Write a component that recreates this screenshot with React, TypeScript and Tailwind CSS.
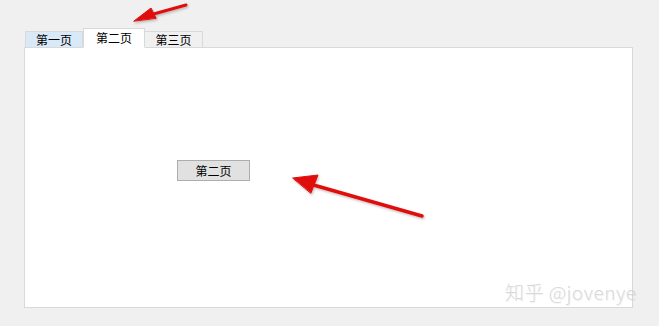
import { useState } from 'react';

type Tab = 'one' | 'two' | 'three';

const tabs: { id: Tab; label: string }[] = [
    { id: 'one', label: '第一页' },
    { id: 'two', label: '第二页' },
    { id: 'three', label: '第三页' },
];

const App = () => {
    const [active, setActive] = useState<Tab>('two');

    return (
        <div
            className="relative w-[659px] h-[326px] overflow-hidden bg-[#f0f0f0] pt-[28px] pl-[24px] text-[12px] text-black"
            style={{ fontFamily: '"Microsoft YaHei", "Noto Sans CJK SC", sans-serif' }}
        >
            {/* Tabs */}
            <div className="flex items-end h-[19px] pl-[1px]">
                {tabs.map((t, i) => {
                    const selected = t.id === active;
                    return (
                        <button
                            key={t.id}
                            onClick={() => setActive(t.id)}
                            className={`relative flex items-center justify-center leading-none border border-[#d9d9d9] ${
                                selected
                                    ? 'z-10 h-[20px] w-[62px] -mb-px bg-white border-b-white pb-[1px]'
                                    : i === 0
                                      ? 'h-[16px] w-[58px] border-b-0 bg-[#d9e9f8]'
                                      : 'h-[16px] w-[58px] border-b-0 border-l-0 bg-[#f0f0f0]'
                            }`}
                        >
                            {t.label}
                        </button>
                    );
                })}
            </div>

            {/* Page */}
            <div className="w-[609px] h-[261px] bg-white border border-[#d9d9d9]">
                <button className="mt-[112px] ml-[152px] w-[73px] h-[21px] flex items-center justify-center leading-none bg-[#e1e1e1] border border-[#adadad]">
                    第二页
                </button>
            </div>

            {/* Watermark */}
            <div
                className="absolute left-[505px] top-[282px] text-[19px] leading-none font-light text-[#d8d8d8] tracking-[0.5px]"
                style={{ textShadow: '1px 1px 1px rgba(0,0,0,0.06)' }}
            >
                知乎 @jovenye
            </div>

            {/* Annotation arrows */}
            <svg className="absolute inset-0 pointer-events-none" width="659" height="326">
                <defs>
                    <filter id="sh" x="-20%" y="-20%" width="140%" height="140%">
                        <feDropShadow dx="1" dy="1.5" stdDeviation="1.2" floodColor="#000" floodOpacity="0.25" />
                    </filter>
                </defs>
                <g filter="url(#sh)" fill="#e01010" stroke="#e01010" strokeLinecap="round">
                    <line x1="186" y1="5" x2="150" y2="15" strokeWidth="3" />
                    <polygon points="134,21 151,8 156,18" strokeWidth="1" />
                    <line x1="422" y1="216" x2="310" y2="184" strokeWidth="3.5" />
                    <polygon points="293,178 318,175 311,193" strokeWidth="1" />
                </g>
            </svg>
        </div>
    );
};

export default App;
